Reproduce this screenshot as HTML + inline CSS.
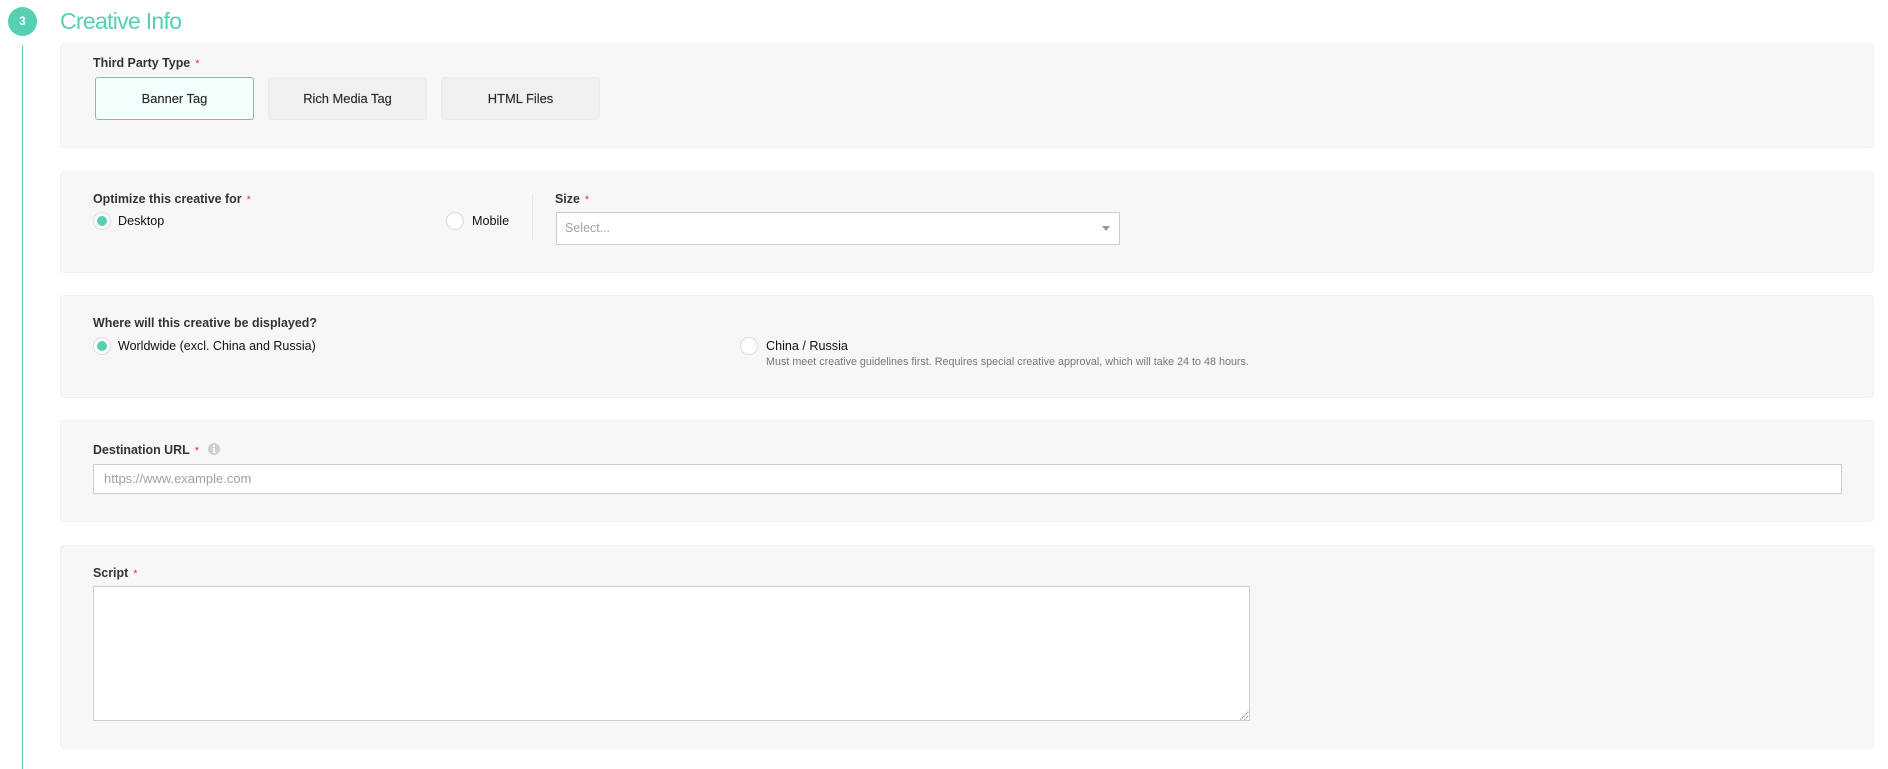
<!DOCTYPE html>
<html>
<head>
<meta charset="utf-8">
<style>
html,body{margin:0;padding:0;background:#fff;width:1888px;height:769px;overflow:hidden;font-family:"Liberation Sans",Arial,sans-serif;}
.a{position:absolute;white-space:nowrap;}
.t{filter:blur(.3px);}
.panel{position:absolute;left:60px;width:1814px;background:#f7f7f7;border:1px solid #f1f1f1;border-radius:4px;box-sizing:border-box;}
.label{position:absolute;white-space:nowrap;font-weight:700;font-size:12.45px;line-height:16px;color:#333;filter:blur(.3px);}
.req{color:#e8304a;font-weight:400;font-size:11px;margin-left:5px;}
.btn{position:absolute;top:77px;width:159px;height:43px;box-sizing:border-box;background:#f0f0f0;border:1px solid #ebebeb;border-radius:3px;}
.btn span{display:block;text-align:center;font-size:12.9px;line-height:42px;color:#2b2b2b;-webkit-text-stroke:.15px #2b2b2b;filter:blur(.3px);}
.radio{position:absolute;width:18px;height:18px;box-sizing:border-box;border:1px solid #dcdcdc;border-radius:50%;background:#fff;}
.radio.on::after{content:"";position:absolute;left:3px;top:3px;width:10px;height:10px;border-radius:50%;background:#56cfb2;}
.rt{position:absolute;white-space:nowrap;font-size:12.6px;line-height:16px;color:#111;filter:blur(.3px);}
</style>
</head>
<body>
<div class="a" style="left:8px;top:7px;width:29px;height:29px;border-radius:50%;background:#56cfb2;"></div>
<div class="a t" style="left:8px;top:7px;width:29px;height:29px;color:#fff;font-weight:700;font-size:12px;line-height:29px;text-align:center;">3</div>
<div class="a" style="left:22px;top:45px;width:1px;height:724px;background:#56cfb2;"></div>
<div class="a t" style="left:60px;top:7px;font-size:23px;line-height:28px;letter-spacing:-.7px;color:#56cfb2;">Creative Info</div>

<div class="panel" style="top:43px;height:105px;"></div>
<div class="panel" style="top:171px;height:102px;"></div>
<div class="panel" style="top:295px;height:103px;"></div>
<div class="panel" style="top:420px;height:102px;"></div>
<div class="panel" style="top:545px;height:204px;"></div>

<div class="label" style="left:93px;top:55px;">Third Party Type<span class="req">*</span></div>
<div class="btn" style="left:95px;background:#f3fffc;border-color:#56cfb2;"><span>Banner Tag</span></div>
<div class="btn" style="left:268px;"><span>Rich Media Tag</span></div>
<div class="btn" style="left:441px;"><span>HTML Files</span></div>

<div class="label" style="left:93px;top:191px;">Optimize this creative for<span class="req">*</span></div>
<div class="radio on" style="left:93px;top:212px;"></div>
<div class="rt" style="left:118px;top:213px;">Desktop</div>
<div class="radio" style="left:446px;top:212px;"></div>
<div class="rt" style="left:472px;top:213px;">Mobile</div>
<div class="a" style="left:532px;top:194px;width:1px;height:46px;background:#e8e8e8;"></div>
<div class="label" style="left:555px;top:191px;">Size<span class="req">*</span></div>
<div class="a" style="left:556px;top:212px;width:564px;height:33px;box-sizing:border-box;background:#fff;border:1px solid #cccccc;"></div>
<div class="a t" style="left:565px;top:220px;font-size:12.5px;line-height:16px;color:#a3a3a3;">Select...</div>
<svg class="a" style="left:1102px;top:226px;" width="8" height="5" viewBox="0 0 8 5"><path d="M0 0H8L4 5Z" fill="#999"/></svg>

<div class="label" style="left:93px;top:315px;">Where will this creative be displayed?</div>
<div class="radio on" style="left:93px;top:337px;"></div>
<div class="rt" style="left:118px;top:338px;font-size:12.5px;">Worldwide (excl. China and Russia)</div>
<div class="radio" style="left:740px;top:337px;"></div>
<div class="rt" style="left:766px;top:338px;">China / Russia</div>
<div class="a t" style="left:766px;top:355px;font-size:10.78px;line-height:14px;color:#777;">Must meet creative guidelines first. Requires special creative approval, which will take 24 to 48 hours.</div>

<div class="label" style="left:93px;top:442px;">Destination URL<span class="req">*</span></div>
<svg class="a" style="left:208px;top:443px;" width="12" height="12" viewBox="0 0 12 12"><circle cx="6" cy="6" r="6" fill="#cfcfcf"/><rect x="5" y="2" width="2" height="2" fill="#fff"/><path d="M4.5 5H7V9H8V10H4.5V9H5.3V6H4.5Z" fill="#fff"/></svg>
<div class="a" style="left:93px;top:464px;width:1749px;height:30px;box-sizing:border-box;background:#fff;border:1px solid #c6cddd;"></div>
<div class="a t" style="left:104px;top:471px;font-size:13px;line-height:16px;color:#a0a0a0;">https://www.example.com</div>

<div class="label" style="left:93px;top:565px;">Script<span class="req">*</span></div>
<div class="a" style="left:93px;top:586px;width:1157px;height:135px;box-sizing:border-box;background:#fff;border:1px solid #c6cddd;"></div>
<svg class="a" style="left:1240px;top:711px;" width="9" height="9" viewBox="0 0 9 9"><path d="M0.5 8.5L8.5 0.5M4.5 8.5L8.5 4.5" stroke="#666" stroke-width="1" stroke-dasharray="1 1" fill="none"/></svg>
</body>
</html>
